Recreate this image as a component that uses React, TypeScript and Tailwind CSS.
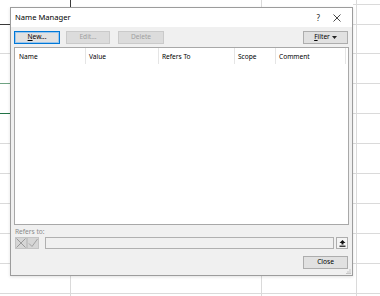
import React from "react";

function HLine({ y, x = 0, w = 380, c = "#dadada" }: { y: number; x?: number; w?: number; c?: string }) {
  return <div className="absolute h-px" style={{ top: y, left: x, width: w, background: c }} />;
}
function VLine({ x, y = 0, h = 296, c = "#dadada" }: { x: number; y?: number; h?: number; c?: string }) {
  return <div className="absolute w-px" style={{ left: x, top: y, height: h, background: c }} />;
}

export default function App() {
  const rows = [24, 53, 83, 113, 143, 173, 203, 233, 263, 293];
  return (
    <div className="relative w-[380px] h-[296px] bg-white overflow-hidden font-['Noto_Sans','Liberation_Sans',sans-serif] text-black">
      {/* spreadsheet grid */}
      {rows.map((y) => (
        <HLine key={y} y={y} />
      ))}
      <HLine y={4} x={353} w={27} />
      <VLine x={70} />
      <VLine x={261} />
      <VLine x={356} />
      <VLine x={70} y={0} h={7} c="#3a3a3a" />
      <HLine y={24} x={0} w={10} c="#3a3a3a" />
      <HLine y={83} x={0} w={10} c="#6fa383" />
      <HLine y={113} x={0} w={10} c="#217346" />

      {/* dialog */}
      <div className="absolute left-[10px] top-[7px] w-[343px] h-[269px] border border-[#9c9c9c] bg-[#f0f0f0] flex flex-col shadow-[0_1px_3px_rgba(0,0,0,0.12)]">
        <div className="h-[19px] bg-white flex items-center pl-[4px] text-[7.6px] leading-none">
          <span>Name Manager</span>
          <span className="ml-auto mr-[13px] text-[8px] text-[#222]">?</span>
          <svg width="8" height="8" viewBox="0 0 8 8" className="mr-[11px]">
            <path d="M0.5 0.5 L7.5 7.5 M7.5 0.5 L0.5 7.5" stroke="#333" strokeWidth="0.9" />
          </svg>
        </div>
        <div className="flex-1 flex flex-col pl-[3px] pr-[3px] text-[6.6px] leading-none">
          <div className="mt-[4px] h-[13px] flex">
            <div className="w-[46px] h-[13px] border border-[#0078d7] shadow-[inset_0_0_0_1px_#9cc6ec] bg-[#e1e1e1] flex items-center justify-center">
              <span><span className="underline">N</span>ew...</span>
            </div>
            <div className="ml-[6px] w-[44px] h-[13px] border border-[#cacaca] bg-[#dcdcdc] text-[#a0a0a0] flex items-center justify-center">
              Edit...
            </div>
            <div className="ml-[8px] w-[46px] h-[13px] border border-[#cacaca] bg-[#dcdcdc] text-[#a0a0a0] flex items-center justify-center">
              Delete
            </div>
            <div className="ml-auto mr-[1px] w-[45px] h-[13px] border border-[#adadad] bg-[#e1e1e1] flex items-center justify-center gap-[2px]">
              <span><span className="underline">F</span>ilter</span>
              <svg width="5" height="3" viewBox="0 0 5 3">
                <path d="M0 0 L5 0 L2.5 3 Z" fill="#222" />
              </svg>
            </div>
          </div>
          <div className="mt-[3px] h-[178px] border border-[#a8a8a8] bg-white">
            <div className="h-[16px] flex">
              <div className="w-[71px] pl-[4px] pt-[2px] flex items-center border-r border-[#e5e5e5]">Name</div>
              <div className="w-[73px] pl-[3px] pt-[2px] flex items-center border-r border-[#e5e5e5]">Value</div>
              <div className="w-[76px] pl-[3px] pt-[2px] flex items-center border-r border-[#e5e5e5]">Refers To</div>
              <div className="w-[41px] pl-[3px] pt-[2px] flex items-center border-r border-[#e5e5e5]">Scope</div>
              <div className="w-[70px] pl-[3px] pt-[2px] flex items-center border-r border-[#e5e5e5]">Comment</div>
            </div>
          </div>
          <div className="mt-[2px] h-[10px] pl-[1px] pt-[1px] flex items-center text-[#8a8a8a]">Refers to:</div>
          <div className="h-[12px] flex">
            <div className="ml-[1px] w-[12px] h-[12px] border border-[#c4c4c4] bg-[#d6d6d6] flex items-center justify-center">
              <svg width="10" height="10" viewBox="0 0 10 10">
                <path d="M0.5 0.5 L9.5 9.5 M9.5 0.5 L0.5 9.5" stroke="#9a9a9a" strokeWidth="1" />
              </svg>
            </div>
            <div className="w-[12px] h-[12px] border border-[#c4c4c4] bg-[#d6d6d6] flex items-center justify-center">
              <svg width="10" height="10" viewBox="0 0 10 10">
                <path d="M1 5.5 L4 8.5 L9.5 1" stroke="#a2a2a2" strokeWidth="1" fill="none" />
              </svg>
            </div>
            <div className="ml-[6px] flex-1 h-[12px] border border-[#b0b0b0] bg-[#f0f0f0]" />
            <div className="ml-[2px] mr-[1px] w-[12px] h-[12px] border border-[#adadad] bg-[#f4f4f4] flex items-center justify-center">
              <svg width="7" height="7" viewBox="0 0 7 7">
                <path d="M3.5 0 L6.5 3 L4.5 3 L4.5 4.6 L2.5 4.6 L2.5 3 L0.5 3 Z" fill="#111" />
                <rect x="0.5" y="5.6" width="6" height="1.2" fill="#111" />
              </svg>
            </div>
          </div>
          <div className="mt-[7px] h-[13px] flex">
            <div className="ml-auto mr-[1px] w-[45px] h-[13px] border border-[#adadad] bg-[#e1e1e1] flex items-center justify-center">
              Close
            </div>
          </div>
        </div>
        <svg width="5" height="5" viewBox="0 0 5 5" className="absolute right-[1px] bottom-[1px]">
          <rect x="3.5" y="0.5" width="1" height="1" fill="#9a9a9a" />
          <rect x="1.5" y="2.5" width="1" height="1" fill="#9a9a9a" />
          <rect x="3.5" y="2.5" width="1" height="1" fill="#9a9a9a" />
          <rect x="-0.5" y="4" width="1" height="1" fill="#9a9a9a" />
          <rect x="1.5" y="4" width="1" height="1" fill="#9a9a9a" />
          <rect x="3.5" y="4" width="1" height="1" fill="#9a9a9a" />
        </svg>
      </div>
    </div>
  );
}
